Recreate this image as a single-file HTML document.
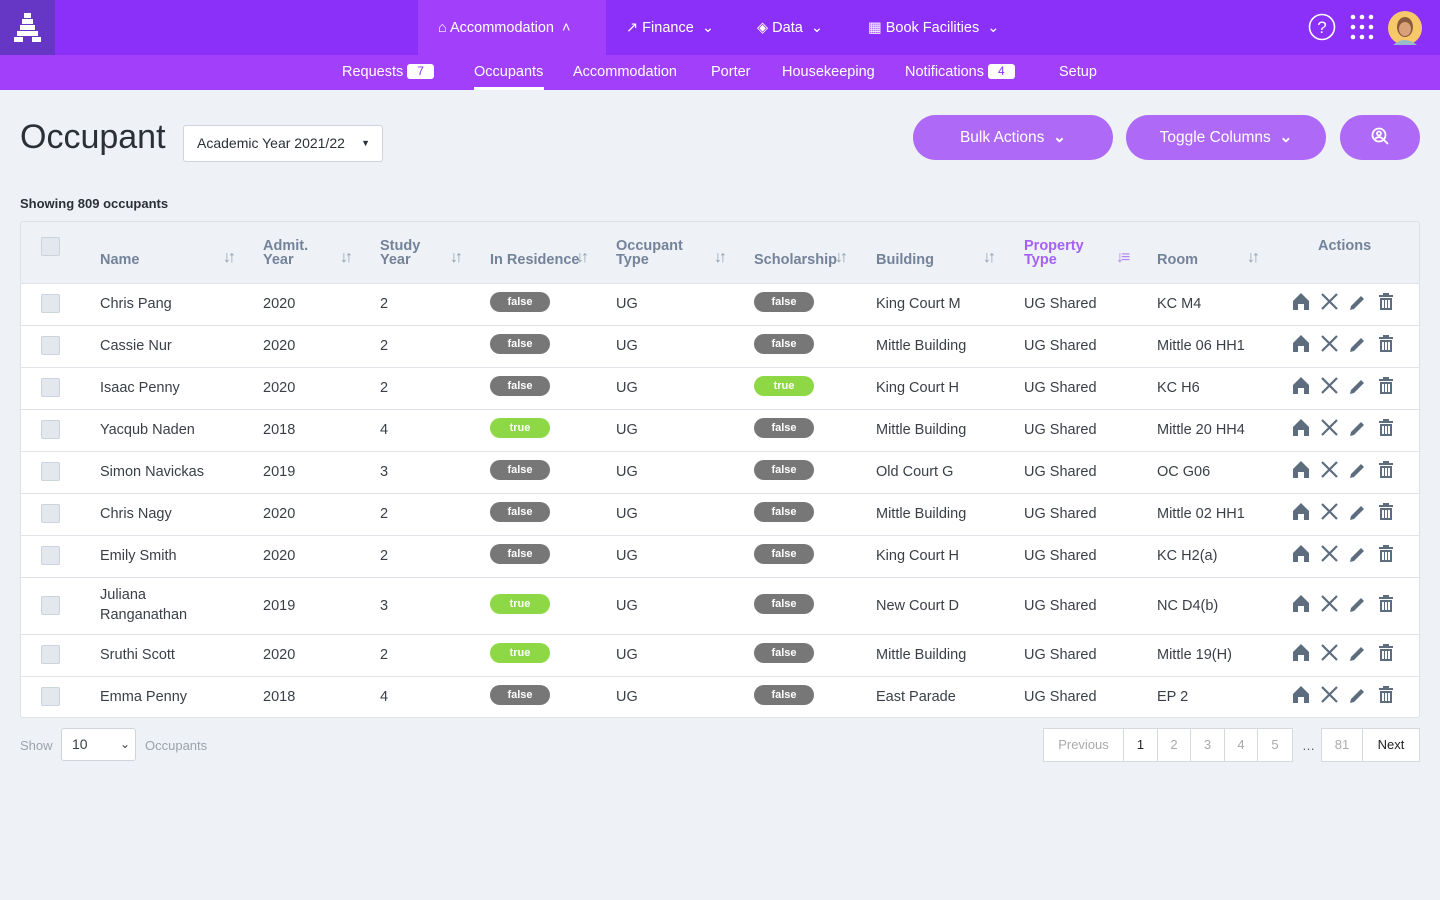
<!DOCTYPE html>
<html><head><meta charset="utf-8"><style>
*{box-sizing:border-box;margin:0;padding:0}
body{width:1440px;height:900px;background:#eef1f5;font-family:"Liberation Sans",sans-serif;color:#3a3f47;position:relative;overflow:hidden;font-size:14px}
.top{position:absolute;left:0;top:0;width:1440px;height:55px;background:#8b30f8}
.logo{position:absolute;left:0;top:0;width:55px;height:55px;background:#6636c4}
.nav{position:absolute;top:1px;height:55px;color:#fff;font-size:14.5px;line-height:55px}
.sub{position:absolute;left:0;top:55px;width:1440px;height:35px;background:#a13ffb}
.si{position:absolute;top:64px;color:#fff;font-size:14.5px}
.badge{display:inline-block;background:#fff;color:#8b30f8;border-radius:3px;padding:0 10px;font-size:12px;line-height:15px;margin-left:4px;vertical-align:1px}
.btn{position:absolute;top:115px;height:45px;border-radius:23px;background:#ae69f7;color:#fff;font-size:15.5px;line-height:45px;text-align:center}
.tbl{position:absolute;left:20px;top:221px;width:1400px;height:497px;border:1px solid #dde1e6;background:#fff;border-radius:3px;overflow:hidden}
.hd{position:absolute;left:0;top:0;width:1398px;height:61px;background:#eef1f5}
.h{position:absolute;color:#74839a;font-size:14.5px;line-height:14px;font-weight:bold}
.srt{position:absolute;top:27px;color:#8fa0b2;font-size:16px;font-weight:bold;letter-spacing:-3px}
.row{position:absolute;left:0;width:1398px;border-top:1px solid #dfe2e6}
.c{position:absolute;font-size:14.5px;color:#3a3f47}
.cb{position:absolute;left:20px;width:19px;height:19px;background:#e3e7ee;border:1px solid #ccd3dc;border-radius:2px}
.pill{position:absolute;width:60px;height:20px;border-radius:10px;color:#fff;font-size:11px;font-weight:bold;text-align:center;line-height:20px}
.f{background:#777}.t{background:#8fd845}
.act{position:absolute;left:1271px}
.pg{position:absolute;top:728px;height:34px;border:1px solid #d5d8dc;background:#fff;font-size:13px;line-height:32px;text-align:center;color:#aaa}
</style></head><body>
<div class="top"></div>
<div class="logo"><svg width="55" height="55" viewBox="0 0 55 55"><g fill="#fff"><rect x="24" y="13" width="7" height="5"/><rect x="22" y="19" width="11" height="5"/><rect x="20" y="25" width="15" height="5"/><rect x="17" y="31" width="21" height="5"/><rect x="14" y="37" width="9" height="5"/><rect x="32" y="37" width="9" height="5"/></g></svg></div>
<div style="position:absolute;left:418px;top:0;width:188px;height:55px;background:#a13ffb"></div>
<div class="nav" style="left:438px">⌂ Accommodation &nbsp;˄</div>
<div class="nav" style="left:626px">↗ Finance &nbsp;⌄</div>
<div class="nav" style="left:757px">◈ Data &nbsp;⌄</div>
<div class="nav" style="left:868px">▦ Book Facilities &nbsp;⌄</div>
<svg style="position:absolute;left:1308px;top:13px" width="28" height="28"><circle cx="14" cy="14" r="12.5" fill="none" stroke="#fff" stroke-width="1.6"/><text x="14" y="20" fill="#fff" font-size="17" text-anchor="middle" font-family="Liberation Sans">?</text></svg>
<svg style="position:absolute;left:1349px;top:14px" width="28" height="28" fill="#fff"><circle cx="4" cy="3" r="2.3"/><circle cx="13" cy="3" r="2.3"/><circle cx="22" cy="3" r="2.3"/><circle cx="4" cy="13" r="2.3"/><circle cx="13" cy="13" r="2.3"/><circle cx="22" cy="13" r="2.3"/><circle cx="4" cy="23" r="2.3"/><circle cx="13" cy="23" r="2.3"/><circle cx="22" cy="23" r="2.3"/></svg>
<svg style="position:absolute;left:1388px;top:11px" width="34" height="34"><circle cx="17" cy="17" r="17" fill="#f6c86a"/><ellipse cx="17" cy="16" rx="8" ry="10" fill="#8a5a3c"/><ellipse cx="17" cy="18" rx="6" ry="7" fill="#d9a07a"/><path d="M5 34 Q17 24 29 34Z" fill="#9ab9c9"/></svg>
<div class="sub"></div>
<div class="si" style="left:342px">Requests<span class="badge">7</span></div>
<div class="si" style="left:474px">Occupants</div>
<div style="position:absolute;left:474px;top:87px;width:70px;height:3px;background:#fff"></div>
<div class="si" style="left:573px">Accommodation</div>
<div class="si" style="left:711px">Porter</div>
<div class="si" style="left:782px">Housekeeping</div>
<div class="si" style="left:905px">Notifications<span class="badge">4</span></div>
<div class="si" style="left:1059px">Setup</div>

<div style="position:absolute;left:20px;top:118px;font-size:34px;color:#2b2f36">Occupant</div>
<div style="position:absolute;left:183px;top:125px;width:200px;height:37px;background:#fff;border:1px solid #cfd4da;border-radius:3px;font-size:14px;line-height:35px;padding-left:13px;color:#2b2f36">Academic Year 2021/22<span style="position:absolute;right:12px;top:0;font-size:9px">▼</span></div>
<div class="btn" style="left:913px;width:200px">Bulk Actions &nbsp;<b>⌄</b></div>
<div class="btn" style="left:1126px;width:200px">Toggle Columns &nbsp;<b>⌄</b></div>
<div class="btn" style="left:1340px;width:80px"><svg width="20" height="20" style="vertical-align:-4px" fill="none" stroke="#fff" stroke-width="1.8"><circle cx="9" cy="9" r="6.5"/><circle cx="9" cy="7.5" r="2"/><path d="M5 13q4-4 8 0M14 14l4 4"/></svg></div>
<div style="position:absolute;left:20px;top:196px;font-size:13px;font-weight:bold;color:#2b2f36">Showing 809 occupants</div>

<div class="tbl">
<div class="hd"></div>
<div class="cb" style="top:15px"></div>
<div class="h" style="left:79px;top:31px">Name</div><div class="srt" style="left:202px">↓↑</div>
<div class="h" style="left:242px;top:17px">Admit.<br>Year</div><div class="srt" style="left:319px">↓↑</div>
<div class="h" style="left:359px;top:17px">Study<br>Year</div><div class="srt" style="left:429px">↓↑</div>
<div class="h" style="left:469px;top:31px">In Residence</div><div class="srt" style="left:555px">↓↑</div>
<div class="h" style="left:595px;top:17px">Occupant<br>Type</div><div class="srt" style="left:693px">↓↑</div>
<div class="h" style="left:733px;top:31px">Scholarship</div><div class="srt" style="left:814px">↓↑</div>
<div class="h" style="left:855px;top:31px">Building</div><div class="srt" style="left:962px">↓↑</div>
<div class="h" style="left:1003px;top:17px;color:#a561f5">Property<br>Type</div><div class="srt" style="left:1095px;color:#b285f5">↓≡</div>
<div class="h" style="left:1136px;top:31px">Room</div><div class="srt" style="left:1226px">↓↑</div>
<div class="h" style="left:1297px;top:17px">Actions</div>

<div id="rows"></div>
</div>

<div style="position:absolute;left:20px;top:738px;color:#9aa3ad;font-size:13px">Show</div>
<div style="position:absolute;left:61px;top:728px;width:75px;height:33px;border:1px solid #cfd4da;background:#fff;border-radius:3px;font-size:14px;line-height:31px;padding-left:10px">10<span style="position:absolute;right:5px;font-size:12px">⌄</span></div>
<div style="position:absolute;left:145px;top:738px;color:#9aa3ad;font-size:13px">Occupants</div>
<div class="pg" style="left:1043px;width:81px">Previous</div>
<div class="pg" style="left:1123px;width:35px;color:#222">1</div>
<div class="pg" style="left:1157px;width:34px">2</div>
<div class="pg" style="left:1190px;width:35px">3</div>
<div class="pg" style="left:1224px;width:34px">4</div>
<div class="pg" style="left:1257px;width:36px">5</div>
<div style="position:absolute;left:1302px;top:738px;color:#555;font-size:13px">…</div>
<div class="pg" style="left:1321px;width:42px">81</div>
<div class="pg" style="left:1362px;width:58px;color:#222">Next</div>

<script>
var d=[["Chris Pang","2020","2","f","f","King Court M","KC M4"],["Cassie Nur","2020","2","f","f","Mittle Building","Mittle 06 HH1"],["Isaac Penny","2020","2","f","t","King Court H","KC H6"],["Yacqub Naden","2018","4","t","f","Mittle Building","Mittle 20 HH4"],["Simon Navickas","2019","3","f","f","Old Court G","OC G06"],["Chris Nagy","2020","2","f","f","Mittle Building","Mittle 02 HH1"],["Emily Smith","2020","2","f","f","King Court H","KC H2(a)"],["Juliana<br>Ranganathan","2019","3","t","f","New Court D","NC D4(b)"],["Sruthi Scott","2020","2","t","f","Mittle Building","Mittle 19(H)"],["Emma Penny","2018","4","f","f","East Parade","EP 2"]];
var icons='<svg width="110" height="20" viewBox="0 0 110 20" fill="#5d6d7e"><path d="M1 9 9 1l8 8v9h-5v-6H6v6H1z"/><path d="M30 2l15 15M45 2 30 17" stroke="#5d6d7e" stroke-width="2.2" fill="none"/><path d="M58 18l1-4 10-10 3 3-10 10z"/><path d="M87 3h4V1h6v2h4v2H87zM88 6h12v12H88zM90 8v8h2V8zM93 8v8h2V8zM96 8v8h2V8z" fill-rule="evenodd"/></svg>';
var h='',yy=61;
d.forEach(function(r,i){var ht=i==7?57:42;var m=Math.round(ht/2)-1;
h+='<div class="row" style="top:'+yy+'px;height:'+ht+'px">'+
'<div class="cb" style="top:'+(m-10)+'px"></div>'+
'<div class="c" style="left:79px;top:'+(r[0].indexOf("<br>")>0?7:m-10)+'px;line-height:20px">'+r[0]+'</div>'+
'<div class="c" style="left:242px;top:'+(m-10)+'px;line-height:20px">'+r[1]+'</div>'+
'<div class="c" style="left:359px;top:'+(m-10)+'px;line-height:20px">'+r[2]+'</div>'+
'<div class="pill '+r[3]+'" style="left:469px;top:'+(m-12)+'px">'+(r[3]=="t"?"true":"false")+'</div>'+
'<div class="c" style="left:595px;top:'+(m-10)+'px;line-height:20px">UG</div>'+
'<div class="pill '+r[4]+'" style="left:733px;top:'+(m-12)+'px">'+(r[4]=="t"?"true":"false")+'</div>'+
'<div class="c" style="left:855px;top:'+(m-10)+'px;line-height:20px">'+r[5]+'</div>'+
'<div class="c" style="left:1003px;top:'+(m-10)+'px;line-height:20px">UG Shared</div>'+
'<div class="c" style="left:1136px;top:'+(m-10)+'px;line-height:20px">'+r[6]+'</div>'+
'<div class="act" style="top:'+(m-12)+'px">'+icons+'</div></div>';yy+=ht;});
document.getElementById('rows').innerHTML=h;
</script>
</body></html>
